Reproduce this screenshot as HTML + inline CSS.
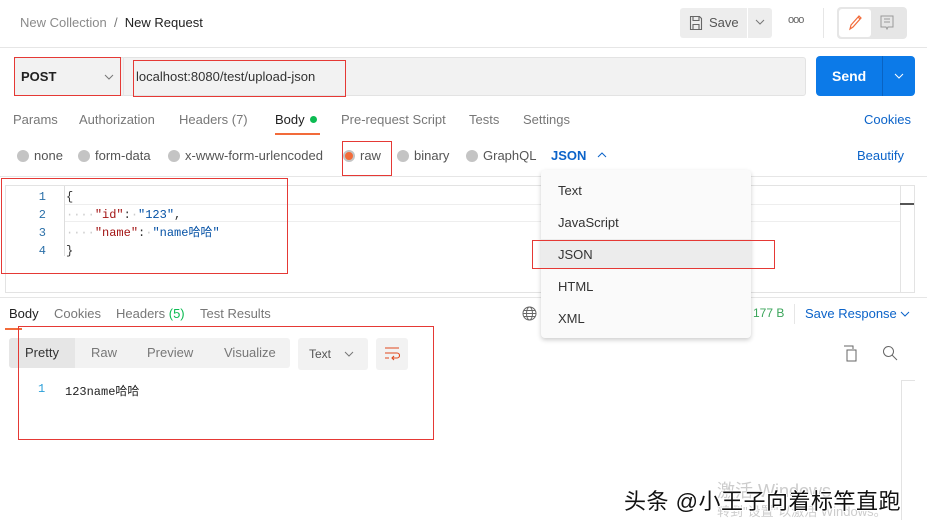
<!DOCTYPE html>
<html><head><meta charset="utf-8"><style>
*{box-sizing:border-box;margin:0;padding:0}
body{width:927px;height:529px;position:relative;overflow:hidden;background:#fff;font-family:"Liberation Sans","Noto Sans CJK SC",sans-serif;font-size:13px;color:#555}
.a{position:absolute;white-space:nowrap}
.rb{position:absolute;border:1px solid #e53935}
.mono{font-family:"Liberation Mono","Noto Sans CJK SC",monospace;font-size:12px}
.dot{display:inline-block;width:12px;height:12px;border-radius:50%;background:#c4c4c4;vertical-align:-2px;margin-right:5px}
</style></head><body>
<div class="a" style="left:20px;top:15px;font-size:13px;color:#8a8a8a">New Collection <span style="color:#777">&nbsp;/&nbsp;</span> <span style="color:#212121">New Request</span></div>
<div class="a" style="left:680px;top:8px;width:67px;height:30px;background:#ededed;border-radius:3px 0 0 3px"></div>
<div class="a" style="left:748px;top:8px;width:24px;height:30px;background:#ededed;border-radius:0 3px 3px 0"></div>
<svg class="a" style="left:689px;top:15px" width="14" height="16" viewBox="0 0 14 16"><path d="M1.5 1.5h9l2 2v11h-11z M4 1.5v4h6v-4 M4 14.5v-5h6v5" fill="none" stroke="#666" stroke-width="1.1"/></svg>
<div class="a" style="left:709px;top:15px;color:#555;font-size:13px">Save</div>
<svg class="a" style="left:755px;top:19px" width="10" height="6"><path d="M1 1l4 4 4-4" fill="none" stroke="#777"/></svg>
<div class="a" style="left:788px;top:14px;color:#666;font-size:11px;letter-spacing:-1px">ooo</div>
<div class="a" style="left:823px;top:8px;width:1px;height:30px;background:#e6e6e6"></div>
<div class="a" style="left:837px;top:7px;width:70px;height:32px;background:#e6e6e6;border-radius:4px"></div>
<div class="a" style="left:839px;top:9px;width:32px;height:28px;background:#fff;border-radius:3px"></div>
<svg class="a" style="left:847px;top:14px" width="16" height="18"><path d="M3 15l1-4 8-9 2 2-8 9z M11 3l2 2" fill="none" stroke="#f26b3a" stroke-width="1.2"/></svg>
<svg class="a" style="left:880px;top:15px" width="14" height="16"><path d="M1 1h12v11H8l-1 2-1-2H1z M4 4h6M4 7h6" fill="none" stroke="#999" stroke-width="1"/></svg>
<div class="a" style="left:0;top:47px;width:927px;height:1px;background:#e6e6e6"></div>
<div class="a" style="left:14px;top:57px;width:792px;height:39px;background:#f2f2f2;border:1px solid #e3e3e3;border-radius:3px"></div>
<div class="a" style="left:123px;top:57px;width:1px;height:39px;background:#e6e6e6"></div>
<div class="a" style="left:21px;top:69px;color:#212121;font-weight:bold;font-size:13px">POST</div>
<svg class="a" style="left:104px;top:74px" width="10" height="6"><path d="M1 1l4 4 4-4" fill="none" stroke="#777"/></svg>
<div class="a" style="left:136px;top:69px;color:#333;font-size:13px">localhost:8080/test/upload-json</div>
<div class="rb" style="left:14px;top:57px;width:107px;height:39px"></div>
<div class="rb" style="left:133px;top:60px;width:213px;height:37px"></div>
<div class="a" style="left:816px;top:56px;width:99px;height:40px;background:#0c7ae8;border-radius:4px"></div>
<div class="a" style="left:882px;top:56px;width:1px;height:40px;background:#0a63c2"></div>
<div class="a" style="left:832px;top:68px;color:#fff;font-weight:bold;font-size:14px">Send</div>
<svg class="a" style="left:894px;top:73px" width="10" height="6"><path d="M1 1l4 4 4-4" fill="none" stroke="#fff"/></svg>
<div class="a" style="left:13px;top:112px;color:#777">Params</div>
<div class="a" style="left:79px;top:112px;color:#777">Authorization</div>
<div class="a" style="left:179px;top:112px;color:#777">Headers (7)</div>
<div class="a" style="left:275px;top:112px;color:#212121">Body <span style="display:inline-block;width:7px;height:7px;border-radius:50%;background:#0cbb52;vertical-align:1px;margin-left:2px"></span></div>
<div class="a" style="left:275px;top:133px;width:45px;height:2px;background:#f26b3a"></div>
<div class="a" style="left:341px;top:112px;color:#777">Pre-request Script</div>
<div class="a" style="left:469px;top:112px;color:#777">Tests</div>
<div class="a" style="left:523px;top:112px;color:#777">Settings</div>
<div class="a" style="left:864px;top:112px;color:#0b63c9">Cookies</div>
<div class="a" style="left:17px;top:148px;color:#555"><span class="dot"></span>none</div>
<div class="a" style="left:78px;top:148px;color:#555"><span class="dot"></span>form-data</div>
<div class="a" style="left:168px;top:148px;color:#555"><span class="dot"></span>x-www-form-urlencoded</div>
<div class="a" style="left:343px;top:148px;color:#555"><span class="dot" style="background:#f26b3a;border:2px solid #c4c4c4"></span>raw</div>
<div class="a" style="left:397px;top:148px;color:#555"><span class="dot"></span>binary</div>
<div class="a" style="left:466px;top:148px;color:#555"><span class="dot"></span>GraphQL</div>
<div class="a" style="left:551px;top:148px;color:#0b63c9;font-weight:bold">JSON</div>
<svg class="a" style="left:597px;top:152px" width="10" height="6"><path d="M1 5l4-4 4 4" fill="none" stroke="#0b63c9"/></svg>
<div class="a" style="left:857px;top:148px;color:#0b63c9">Beautify</div>
<div class="rb" style="left:342px;top:141px;width:50px;height:35px"></div>
<div class="a" style="left:0;top:176px;width:927px;height:1px;background:#e6e6e6"></div>
<div class="a" style="left:5px;top:185px;width:910px;height:108px;border:1px solid #e3e3e3"></div>
<div class="a" style="left:900px;top:186px;width:1px;height:106px;background:#e3e3e3"></div>
<div class="a" style="left:900px;top:203px;width:14px;height:2px;background:#555"></div>
<div class="a" style="left:65px;top:204px;width:835px;height:18px;border-top:1px solid #eee;border-bottom:1px solid #eee"></div>
<div class="a" style="left:64px;top:186px;width:1px;height:70px;background:#ddd"></div>
<div class="a mono" style="left:38px;top:188px;color:#2a6fa8;line-height:18px;text-align:right;width:8px">1<br>2<br>3<br>4</div>
<div class="a mono" style="left:66px;top:188px;line-height:18px;color:#333">{<br><span style="color:#ccc">····</span><span style="color:#a31515">"id"</span>:<span style="color:#ccc">·</span><span style="color:#0451a5">"123"</span>,<br><span style="color:#ccc">····</span><span style="color:#a31515">"name"</span>:<span style="color:#ccc">·</span><span style="color:#0451a5">"name哈哈"</span><br>}</div>
<div class="rb" style="left:1px;top:178px;width:287px;height:96px"></div>
<div class="a" style="left:0;top:297px;width:927px;height:1px;background:#e6e6e6"></div>
<div class="a" style="left:9px;top:306px;color:#212121">Body</div>
<div class="a" style="left:5px;top:328px;width:17px;height:2px;background:#f26b3a"></div>
<div class="a" style="left:54px;top:306px;color:#777">Cookies</div>
<div class="a" style="left:116px;top:306px;color:#777">Headers <span style="color:#0cbb52">(5)</span></div>
<div class="a" style="left:200px;top:306px;color:#777">Test Results</div>
<svg class="a" style="left:522px;top:306px" width="15" height="15"><circle cx="7.5" cy="7.5" r="6.5" fill="none" stroke="#666"/><ellipse cx="7.5" cy="7.5" rx="3" ry="6.5" fill="none" stroke="#666"/><path d="M1 7.5h13M2 4.5h11M2 10.5h11" stroke="#666" fill="none"/></svg>
<div class="a" style="left:753px;top:306px;color:#3aa55a;font-size:12px">177 B</div>
<div class="a" style="left:794px;top:304px;width:1px;height:20px;background:#e6e6e6"></div>
<div class="a" style="left:805px;top:306px;color:#0b63c9">Save Response</div>
<svg class="a" style="left:900px;top:311px" width="10" height="6"><path d="M1 1l4 4 4-4" fill="none" stroke="#0b63c9"/></svg>
<div class="a" style="left:9px;top:338px;width:281px;height:30px;background:#f2f2f2;border-radius:3px"></div>
<div class="a" style="left:9px;top:338px;width:66px;height:30px;background:#e6e6e6;border-radius:3px 0 0 3px"></div>
<div class="a" style="left:25px;top:345px;color:#333">Pretty</div>
<div class="a" style="left:91px;top:345px;color:#777">Raw</div>
<div class="a" style="left:147px;top:345px;color:#777">Preview</div>
<div class="a" style="left:224px;top:345px;color:#777">Visualize</div>
<div class="a" style="left:298px;top:338px;width:70px;height:32px;background:#f2f2f2;border-radius:3px"></div>
<div class="a" style="left:309px;top:347px;color:#555;font-size:12px">Text</div>
<svg class="a" style="left:344px;top:351px" width="10" height="6"><path d="M1 1l4 4 4-4" fill="none" stroke="#777"/></svg>
<div class="a" style="left:376px;top:338px;width:32px;height:32px;background:#f2f2f2;border-radius:3px"></div>
<svg class="a" style="left:384px;top:347px" width="16" height="14"><path d="M1 1h14M1 6h12a2.5 2.5 0 0 1 0 5H8M10 9l-2 2 2 2M1 11h4" fill="none" stroke="#e0481e" stroke-width="1.1"/></svg>
<svg class="a" style="left:843px;top:345px" width="16" height="17"><path d="M1 1h9v3M4 5h9v11H4z" fill="none" stroke="#666"/></svg>
<svg class="a" style="left:882px;top:345px" width="16" height="16"><circle cx="6.5" cy="6.5" r="5" fill="none" stroke="#666"/><path d="M10 10l5 5" stroke="#666"/></svg>
<div class="a mono" style="left:38px;top:382px;color:#2a9fd8">1</div>
<div class="a mono" style="left:65px;top:382px;color:#222">123name哈哈</div>
<div class="rb" style="left:18px;top:326px;width:416px;height:114px"></div>
<div class="a" style="left:901px;top:380px;width:1px;height:140px;background:#e3e3e3"></div>
<div class="a" style="left:901px;top:380px;width:14px;height:1px;background:#e3e3e3"></div>
<div class="a" style="left:541px;top:170px;width:210px;height:168px;background:#fafafa;border-radius:4px;box-shadow:0 2px 5px rgba(0,0,0,.2)"></div>
<div class="a" style="left:541px;top:239px;width:210px;height:30px;background:#ececec"></div>
<div class="a" style="left:558px;top:183px;color:#333">Text</div>
<div class="a" style="left:558px;top:215px;color:#333">JavaScript</div>
<div class="a" style="left:558px;top:247px;color:#333">JSON</div>
<div class="a" style="left:558px;top:279px;color:#333">HTML</div>
<div class="a" style="left:558px;top:311px;color:#333">XML</div>
<div class="rb" style="left:532px;top:240px;width:243px;height:29px"></div>
<div class="a" style="left:717px;top:477px;color:#ccc;font-size:18px">激活 Windows</div>
<div class="a" style="left:717px;top:501px;color:#ccc;font-size:13px">转到"设置"以激活 Windows。</div>
<div class="a" style="left:624px;top:484px;color:#111;font-size:22px;letter-spacing:0.5px;text-shadow:-1px 0 #fff,1px 0 #fff,0 -1px #fff,0 1px #fff,1px 1px #fff">头条 @小王子向着标竿直跑</div>
</body></html>
